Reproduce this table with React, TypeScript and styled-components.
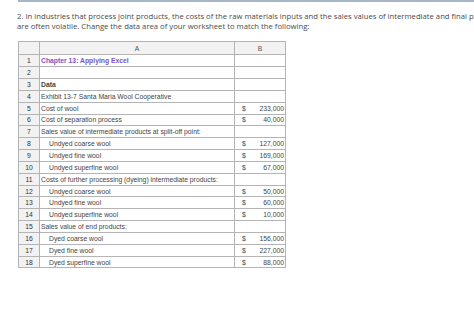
import React from "react";
import styled, { createGlobalStyle } from "styled-components";

const GlobalStyle = createGlobalStyle`
  html, body {
    margin: 0;
    padding: 0;
    background: #ffffff;
    overflow: hidden;
  }
`;

const Page = styled.div`
  width: 474px;
  height: 313px;
  overflow: hidden;
  padding-left: 17px;
  box-sizing: border-box;
`;

const TopBar = styled.div`
  height: 2px;
  margin-left: 1px;
  background: #a7b6c8;
`;

const Intro = styled.div`
  margin-top: 9px;
  font-family: "Open Sans", "Liberation Sans", sans-serif;
  font-size: 7.7px;
  line-height: 10px;
  color: #4a4a4a;
  white-space: nowrap;
`;

const Sheet = styled.table`
  margin-top: 10px;
  margin-left: 1px;
  border-collapse: collapse;
  font-family: "Liberation Sans", Arial, sans-serif;
  font-size: 6.8px;
  color: #444;
  table-layout: fixed;
`;

const HeadRow = styled.tr`
  height: 13.3px;
`;

const Line = styled.tr`
  height: 11.85px;
`;

const HeadCell = styled.th<{ $w: number }>`
  width: ${(p) => p.$w}px;
  padding: 0;
  background: #f2f2f2;
  border: 1px solid #b4b4b4;
  font-weight: normal;
  color: #555;
  text-align: center;
`;

const NumCell = styled.td`
  padding: 0;
  background: #f2f2f2;
  border: 1px solid #b4b4b4;
  text-align: center;
  color: #333;
`;

const TextCell = styled.td<{ $indent?: boolean; $bold?: boolean; $title?: boolean }>`
  padding: 0 0 0 ${(p) => (p.$indent ? 9 : 1)}px;
  border: 1px solid #b4b4b4;
  white-space: nowrap;
  font-weight: ${(p) => (p.$bold || p.$title ? "bold" : "normal")};
  color: ${(p) => (p.$title ? "#7b52c9" : "#444")};
`;

const ValueCell = styled.td`
  padding: 0 1px 0 7px;
  border: 1px solid #b4b4b4;
`;

const Amount = styled.div`
  display: flex;
  justify-content: space-between;
`;

type Row = {
  label: string;
  indent?: boolean;
  bold?: boolean;
  title?: boolean;
  value?: string;
};

const rows: Row[] = [
  { label: "Chapter 13: Applying Excel", title: true },
  { label: "" },
  { label: "Data", bold: true },
  { label: "Exhibit 13-7 Santa Maria Wool Cooperative" },
  { label: "Cost of wool", value: "233,000" },
  { label: "Cost of separation process", value: "40,000" },
  { label: "Sales value of intermediate products at split-off point:" },
  { label: "Undyed coarse wool", indent: true, value: "127,000" },
  { label: "Undyed fine wool", indent: true, value: "169,000" },
  { label: "Undyed superfine wool", indent: true, value: "67,000" },
  { label: "Costs of further processing (dyeing) intermediate products:" },
  { label: "Undyed coarse wool", indent: true, value: "50,000" },
  { label: "Undyed fine wool", indent: true, value: "60,000" },
  { label: "Undyed superfine wool", indent: true, value: "10,000" },
  { label: "Sales value of end products:" },
  { label: "Dyed coarse wool", indent: true, value: "156,000" },
  { label: "Dyed fine wool", indent: true, value: "227,000" },
  { label: "Dyed superfine wool", indent: true, value: "88,000" },
];

export default function App() {
  return (
    <>
      <GlobalStyle />
      <Page>
        <TopBar />
        <Intro>
          2. In industries that process joint products, the costs of the raw materials inputs and the sales values of intermediate and final products
          <br />
          are often volatile. Change the data area of your worksheet to match the following:
        </Intro>
        <Sheet>
          <thead>
            <HeadRow>
              <HeadCell $w={20} />
              <HeadCell $w={194}>A</HeadCell>
              <HeadCell $w={50}>B</HeadCell>
            </HeadRow>
          </thead>
          <tbody>
            {rows.map((r, i) => (
              <Line key={i}>
                <NumCell>{i + 1}</NumCell>
                <TextCell $indent={r.indent} $bold={r.bold} $title={r.title}>
                  {r.label}
                </TextCell>
                <ValueCell>
                  {r.value && (
                    <Amount>
                      <span>$</span>
                      <span>{r.value}</span>
                    </Amount>
                  )}
                </ValueCell>
              </Line>
            ))}
          </tbody>
        </Sheet>
      </Page>
    </>
  );
}
